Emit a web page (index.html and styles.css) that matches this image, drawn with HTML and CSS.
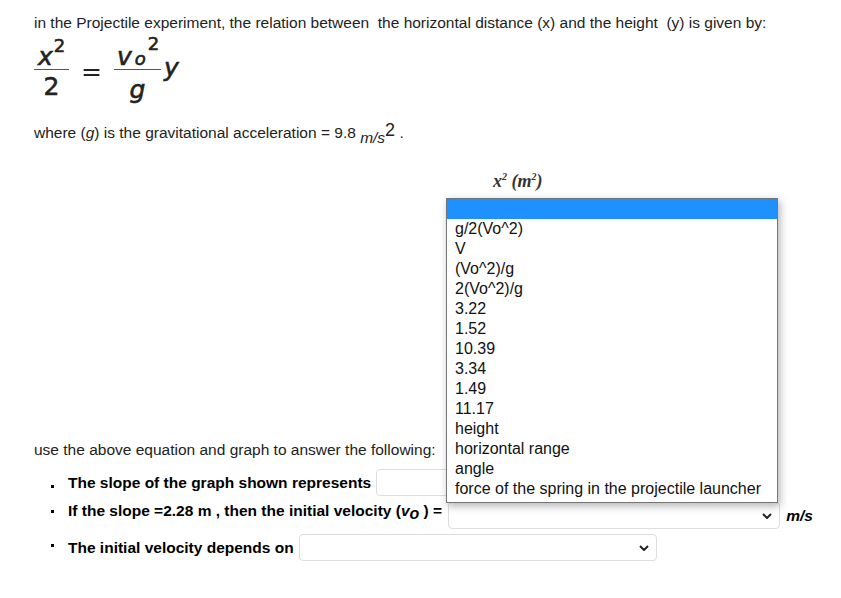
FILE: index.html
```html
<!DOCTYPE html>
<html lang="en">

<head>
    <meta charset="UTF-8">
    <meta name="viewport" content="width=device-width, initial-scale=1.0">
    <title>Projectile experiment</title>
    <link rel="stylesheet" href="styles.css">
</head>

<body>
    <div class="page">
        <p class="intro">in the Projectile experiment, the relation between &nbsp;the horizontal distance (x) and the height &nbsp;(y) is given by:</p>

        <div class="formula">
            <div class="frac frac1">
                <div class="num"><i>x</i><sup>2</sup></div>
                <div class="den">2</div>
            </div>
            <div class="eq">=</div>
            <div class="frac frac2">
                <div class="num"><i>v</i><sub>o</sub><sup>2</sup></div>
                <div class="den"><i>g</i></div>
            </div>
            <div class="var"><i>y</i></div>
        </div>

        <p class="where">where (<i>g</i>) is the gravitational acceleration = 9.8 <span class="unit"><i>m/s</i><span class="pow">2</span></span> .</p>

        <div class="graph">
            <div class="graph-label">x<sup>2</sup> (m<sup>2</sup>)</div>
        </div>

        <p class="use">use the above equation and graph to answer the following:</p>

        <ul class="questions">
            <li class="q q1">
                <span class="dot"></span>
                <span class="label">The slope of the graph shown represents</span>
                <div class="select sel1"><svg class="chev" width="10" height="6" viewBox="0 0 10 6"><path d="M1 1 L5 5 L9 1" fill="none" stroke="#222" stroke-width="2"/></svg></div>
            </li>
            <li class="q q2">
                <span class="dot"></span>
                <span class="label">If the slope =2.28 m , then the initial velocity (<i>v</i><sub>o</sub> ) =</span>
                <div class="select sel2"><svg class="chev" width="10" height="6" viewBox="0 0 10 6"><path d="M1 1 L5 5 L9 1" fill="none" stroke="#222" stroke-width="2"/></svg></div>
                <span class="ms">m/s</span>
            </li>
            <li class="q q3">
                <span class="dot mid"></span>
                <span class="label">The initial velocity depends on</span>
                <div class="select sel3"><svg class="chev" width="10" height="6" viewBox="0 0 10 6"><path d="M1 1 L5 5 L9 1" fill="none" stroke="#222" stroke-width="2"/></svg></div>
            </li>
        </ul>

        <ul class="popup">
            <li class="picked">&nbsp;</li>
            <li>g/2(Vo^2)</li>
            <li>V</li>
            <li>(Vo^2)/g</li>
            <li>2(Vo^2)/g</li>
            <li>3.22</li>
            <li>1.52</li>
            <li>10.39</li>
            <li>3.34</li>
            <li>1.49</li>
            <li>11.17</li>
            <li>height</li>
            <li>horizontal range</li>
            <li>angle</li>
            <li>force of the spring in the projectile launcher</li>
        </ul>
    </div>
</body>

</html>
```

FILE: styles.css
```css
body {
    margin: 0;
    background: #fff;
    font-family: "Liberation Sans", Arial, sans-serif;
    font-size: 15.5px;
    color: #222;
}

.page {
    position: relative;
    padding: 14px 0 0 34px;
}

p {
    margin: 0;
    line-height: 18px;
}

/* formula x^2/2 = vo^2/g y */
.formula {
    display: flex;
    align-items: center;
    margin-top: 3px;
    height: 68px;
    font-family: "DejaVu Sans", sans-serif;
    font-size: 25px;
    line-height: 1;
    color: #222;
    -webkit-text-stroke: 0.6px #222;
}

.frac {
    display: flex;
    flex-direction: column;
    align-items: center;
}

.num {
    display: flex;
    align-items: flex-end;
    justify-content: center;
    height: 35px;
    border-bottom: 1.5px solid #555;
    box-sizing: border-box;
}

.frac1 {
    width: 35px;
}

.frac1 .num,
.frac2 .num {
    width: 100%;
}

.frac2 {
    width: 47px;
}

.frac2 .num {
    justify-content: flex-start;
    padding-left: 3px;
}

.den {
    height: 33px;
    display: flex;
    align-items: center;
}

.formula i {
    font-style: oblique;
}

.formula sup {
    font-size: 18px;
    margin-bottom: 14px;
    margin-left: 1px;
}

.formula sub {
    font-size: 18px;
    font-style: oblique;
    margin-bottom: 1px;
    margin-left: 3px;
}

.frac2 .num sup {
    margin-left: 2px;
    margin-bottom: 16px;
}

.frac2 .den {
    margin-top: 6px;
    height: 27px;
}

.eq {
    width: 45px;
    text-align: center;
    margin-top: 4px;
    -webkit-text-stroke: 0;
}

.var {
    margin-left: 3px;
    margin-top: -4px;
}

.where {
    margin-top: 20px;
}

.unit {
    font-style: italic;
}

.unit i {
    position: relative;
    top: 5px;
}

.pow {
    font-style: normal;
    font-size: 18px;
    position: relative;
    top: -2px;
}

.graph {
    height: 299px;
    padding-top: 26px;
    box-sizing: border-box;
}

.graph-label {
    margin-left: 459px;
    font-family: "Liberation Serif", "Times New Roman", serif;
    font-weight: bold;
    font-style: italic;
    font-size: 18px;
    line-height: 18px;
    color: #333;
}

.graph-label sup {
    font-size: 10px;
    vertical-align: 7px;
}

.questions {
    list-style: none;
    margin: 10px 0 0;
    padding: 0 0 0 17px;
    color: #000;
    font-weight: bold;
}

.q {
    display: flex;
    align-items: center;
}

.q2 {
    margin-top: 6px;
    align-items: flex-start;
}

.q2 .label {
    line-height: 18px;
}

.q3 {
    margin-top: 5px;
}

.dot {
    width: 3px;
    height: 3px;
    background: #000;
    margin-right: 14px;
    align-self: flex-end;
    margin-bottom: 8px;
}

.q2 .dot {
    margin-bottom: 16px;
}

.dot.mid {
    align-self: center;
    margin-bottom: 4px;
}

.q i {
    font-style: italic;
}

.q sub {
    font-size: 16px;
    font-style: italic;
    vertical-align: -3px;
}

.select {
    height: 27px;
    box-sizing: border-box;
    border: 1px solid #ddd;
    border-radius: 4px;
    background: #fff;
    display: flex;
    align-items: center;
    justify-content: flex-end;
    padding-right: 7px;
    margin-left: 5px;
}

.sel1 {
    width: 332px;
}

.sel2 {
    width: 332px;
    margin-left: 6px;
}

.sel3 {
    width: 358px;
}

.ms {
    font-style: italic;
    margin: 5px 0 0 6px;
}

/* opened list of the velocity select */
.popup {
    position: absolute;
    left: 446px;
    top: 198px;
    width: 332px;
    box-sizing: border-box;
    margin: 0;
    padding: 0 0 3px;
    list-style: none;
    background: #fff;
    border: 1px solid #767676;
    box-shadow: 2px 3px 8px rgba(0, 0, 0, 0.3);
    color: #111;
    font-size: 16px;
}

.popup li {
    height: 20px;
    line-height: 20px;
    padding-left: 8px;
}

.popup .picked {
    background: #1e90ff;
}
```
